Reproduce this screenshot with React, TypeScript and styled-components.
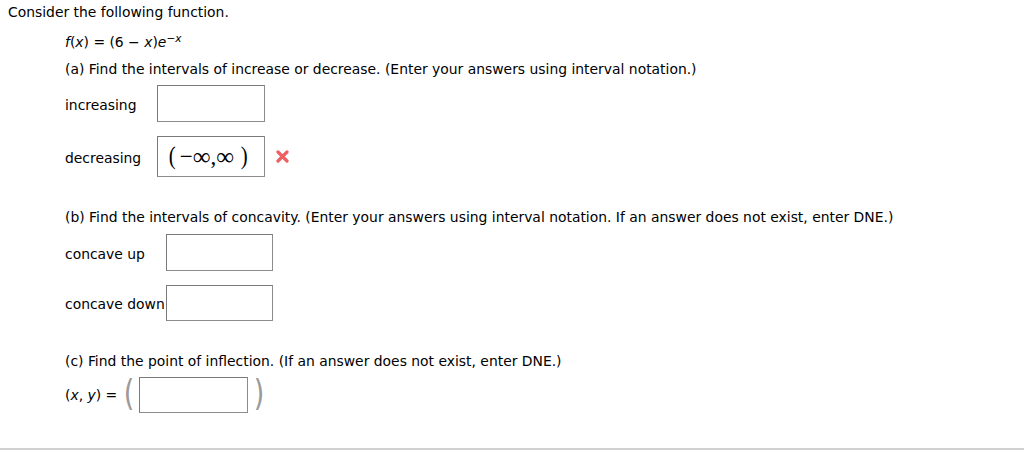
import styled, { createGlobalStyle } from "styled-components";

const GlobalStyle = createGlobalStyle`
  html, body {
    margin: 0;
    padding: 0;
    background: #fff;
  }
  body {
    font-family: Verdana, "DejaVu Sans", sans-serif;
    font-size: 13.9px;
    color: #000;
  }
`;

const Page = styled.div`
  width: 1024px;
  height: 463px;
  box-sizing: border-box;
  padding: 4px 0 0 8px;
  position: relative;
`;

const Line = styled.div<{ $top?: number }>`
  line-height: 16px;
  height: 16px;
  margin-top: ${(p) => p.$top ?? 0}px;
  white-space: nowrap;
`;

const Indent = styled.div`
  padding-left: 57px;
`;

const Sup = styled.sup`
  font-size: 10.5px;
  line-height: 0;
  vertical-align: 5px;
  font-style: italic;
`;

const Row = styled.div<{ $top: number; $h: number }>`
  display: flex;
  align-items: center;
  margin-top: ${(p) => p.$top}px;
  height: ${(p) => p.$h}px;
`;

const Label = styled.span<{ $w: number }>`
  width: ${(p) => p.$w}px;
  flex: none;
  white-space: nowrap;
  padding-top: 2px;
`;

const AnswerBox = styled.div<{ $w?: number }>`
  box-sizing: border-box;
  width: ${(p) => p.$w ?? 108}px;
  height: 100%;
  border: 1px solid #8c8c8c;
  border-top-color: #7a7a7a;
  border-left-color: #7a7a7a;
  display: flex;
  align-items: center;
  padding-left: 10px;
  flex: none;
`;

const MathAnswer = styled.span`
  font-family: "Liberation Serif", "DejaVu Serif", serif;
  font-size: 23px;
  line-height: 26px;
  display: flex;
  align-items: center;
`;

const Fence = styled.span<{ $side: "l" | "r" }>`
  font-size: 26px;
  transform: scaleX(0.8);
  margin: ${(p) => (p.$side === "l" ? "-2px 3px 0 0" : "-2px 0 0 6px")};
`;

const Infinity = styled.span`
  font-size: 25px;
`;

const WrongMark = styled.svg`
  margin-left: 11px;
  flex: none;
`;

const BigParen = styled.span<{ $left: number; $right: number }>`
  font-family: "DejaVu Sans", sans-serif;
  font-size: 36px;
  line-height: 36px;
  color: #9a9a9a;
  transform: scaleX(0.75);
  margin: -4px ${(p) => p.$right}px 0 ${(p) => p.$left}px;
`;

const Rule = styled.div`
  position: absolute;
  left: 0;
  right: 0;
  top: 448px;
  height: 2px;
  background: #d0d0d0;
`;

export default function App() {
  return (
    <Page>
      <GlobalStyle />
      <Line>Consider the following function.</Line>
      <Indent>
        <Line $top={14}>
          <i>f</i>(<i>x</i>) = (6 − <i>x</i>)<i>e</i>
          <Sup>−x</Sup>
        </Line>
        <Line $top={11}>
          (a) Find the intervals of increase or decrease. (Enter your answers
          using interval notation.)
        </Line>
        <Row $top={8} $h={37}>
          <Label $w={92}>increasing</Label>
          <AnswerBox />
        </Row>
        <Row $top={14} $h={41}>
          <Label $w={92}>decreasing</Label>
          <AnswerBox>
            <MathAnswer>
              <Fence $side="l">(</Fence>−<Infinity>∞</Infinity>,
              <Infinity>∞</Infinity>
              <Fence $side="r">)</Fence>
            </MathAnswer>
          </AnswerBox>
          <WrongMark width="13" height="13" viewBox="0 0 13 13">
            <path
              d="M2 2 L11 11 M11 2 L2 11"
              stroke="#ec5f63"
              strokeWidth="3.2"
              strokeLinecap="round"
            />
          </WrongMark>
        </Row>
        <Line $top={32}>
          (b) Find the intervals of concavity. (Enter your answers using
          interval notation. If an answer does not exist, enter DNE.)
        </Line>
        <Row $top={9} $h={37}>
          <Label $w={101}>concave up</Label>
          <AnswerBox $w={107} />
        </Row>
        <Row $top={14} $h={36}>
          <Label $w={101}>concave down</Label>
          <AnswerBox $w={107} />
        </Row>
        <Line $top={32}>
          (c) Find the point of inflection. (If an answer does not exist, enter
          DNE.)
        </Line>
        <Row $top={8} $h={36}>
          <span>
            (<i>x</i>, <i>y</i>) =
          </span>
          <BigParen $left={5} $right={3}>(</BigParen>
          <AnswerBox $w={109} />
          <BigParen $left={4} $right={0}>)</BigParen>
        </Row>
      </Indent>
      <Rule />
    </Page>
  );
}
